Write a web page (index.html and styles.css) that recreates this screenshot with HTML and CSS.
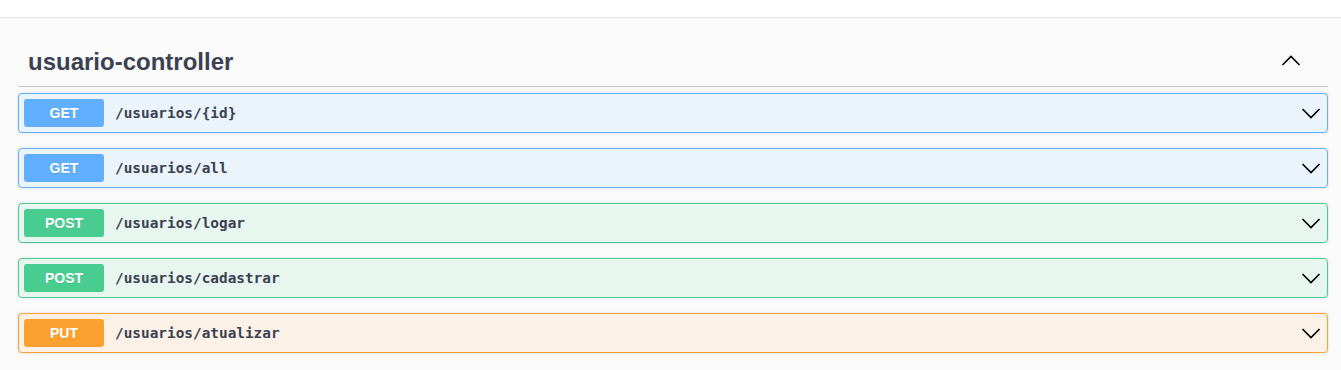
FILE: index.html
```html
<!doctype html>
<html>
<head>
<meta charset="utf-8">
<title>usuario-controller</title>
<link rel="stylesheet" href="styles.css">
</head>
<body>
<div class="topbar"></div>
<div class="tag-section">
	<div class="tag-head">
		<h3 class="tag-title">usuario-controller</h3>
		<svg class="tag-arrow" width="20" height="11" viewBox="0 0 20 11"><polyline points="1.5,10 10,1.5 18.5,10" fill="none" stroke="#000" stroke-width="1.6"/></svg>
	</div>

	<div class="opblock get">
		<span class="method">GET</span>
		<span class="path">/usuarios/{id}</span>
		<svg class="arrow" width="20" height="11" viewBox="0 0 20 11"><polyline points="1.5,1 10,9.5 18.5,1" fill="none" stroke="#000" stroke-width="1.6"/></svg>
	</div>
	<div class="opblock get">
		<span class="method">GET</span>
		<span class="path">/usuarios/all</span>
		<svg class="arrow" width="20" height="11" viewBox="0 0 20 11"><polyline points="1.5,1 10,9.5 18.5,1" fill="none" stroke="#000" stroke-width="1.6"/></svg>
	</div>
	<div class="opblock post">
		<span class="method">POST</span>
		<span class="path">/usuarios/logar</span>
		<svg class="arrow" width="20" height="11" viewBox="0 0 20 11"><polyline points="1.5,1 10,9.5 18.5,1" fill="none" stroke="#000" stroke-width="1.6"/></svg>
	</div>
	<div class="opblock post">
		<span class="method">POST</span>
		<span class="path">/usuarios/cadastrar</span>
		<svg class="arrow" width="20" height="11" viewBox="0 0 20 11"><polyline points="1.5,1 10,9.5 18.5,1" fill="none" stroke="#000" stroke-width="1.6"/></svg>
	</div>
	<div class="opblock put">
		<span class="method">PUT</span>
		<span class="path">/usuarios/atualizar</span>
		<svg class="arrow" width="20" height="11" viewBox="0 0 20 11"><polyline points="1.5,1 10,9.5 18.5,1" fill="none" stroke="#000" stroke-width="1.6"/></svg>
	</div>
</div>
</body>
</html>
```

FILE: styles.css
```css
*{margin:0;padding:0;box-sizing:border-box;}
body{background:#fafafa;font-family:"Liberation Sans",Arial,sans-serif;height:370px;overflow:hidden;}

.topbar{height:18px;background:#fff;border-bottom:1px solid #e3e3e3;}

.tag-section{padding:22px 13px 0 18px;}
.tag-head{display:flex;align-items:center;justify-content:space-between;padding:10px 27px 12px 10px;border-bottom:1px solid #c7c8cc;margin-bottom:6px;}
.tag-title{font-size:24px;line-height:24px;font-weight:bold;color:#3b4151;}
.tag-arrow{display:block;margin-top:-3px;}

.opblock{display:flex;align-items:center;height:40px;padding:0 5px;border:1px solid;border-radius:4px;margin-bottom:15px;box-shadow:0 0 3px rgba(0,0,0,.12);}
.method{width:80px;height:28px;line-height:28px;border-radius:3px;text-align:center;color:#fff;font-size:14px;font-weight:bold;text-shadow:0 1px 0 rgba(0,0,0,.1);}
.path{flex:1;padding:0 11px;font-family:"DejaVu Sans Mono",monospace;font-size:14.4px;font-weight:bold;color:#3b4151;}
.arrow{display:block;margin-right:1px;}

.get{background:#ebf3fb;border-color:#61affe;}
.get .method{background:#61affe;}
.post{background:#e8f6f0;border-color:#49cc90;}
.post .method{background:#49cc90;}
.put{background:#fbf1e6;border-color:#fca130;}
.put .method{background:#fca130;}
```
